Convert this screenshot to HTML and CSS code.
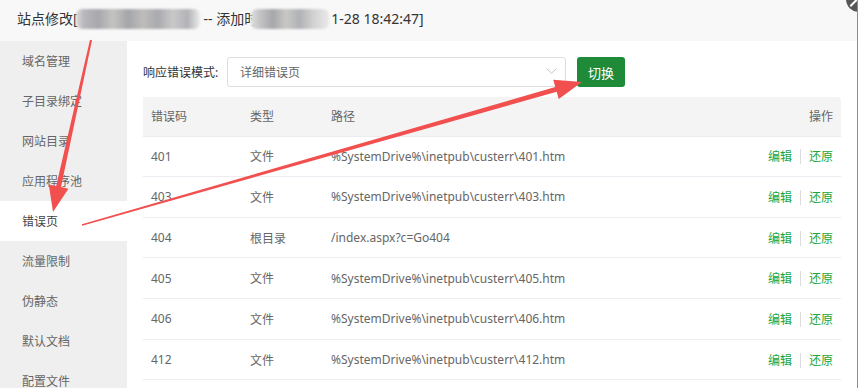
FILE: index.html
```html
<!DOCTYPE html>
<html lang="zh-CN">

<head>
	<meta charset="UTF-8">
	<meta name="viewport" content="width=device-width, initial-scale=1.0">
	<title>站点修改</title>
	<link rel="stylesheet" href="styles.css">
</head>

<body>
	<div class="dialog">
		<div class="dialog-title">站点修改[<span class="mosaic mosaic-name"></span>-- 添加时<span class="mosaic mosaic-date"></span>1-28 18:42:47]</div>

		<div class="dialog-body">
			<ul class="side-menu">
				<li>域名管理</li>
				<li>子目录绑定</li>
				<li>网站目录</li>
				<li>应用程序池</li>
				<li class="active">错误页</li>
				<li>流量限制</li>
				<li>伪静态</li>
				<li>默认文档</li>
				<li>配置文件</li>
			</ul>

			<div class="panel">
				<div class="mode-row">
					<span class="mode-label">响应错误模式:</span>
					<div class="select">
						<span>详细错误页</span>
						<svg class="chevron" width="11" height="6" viewBox="0 0 11 6">
							<path d="M0.5 0.5 L5.5 5.2 L10.5 0.5" fill="none" stroke="#c4c4c4" stroke-width="1" />
						</svg>
					</div>
					<button class="btn-switch">切换</button>
				</div>

				<table class="error-table">
					<thead>
						<tr>
							<th class="col-code">错误码</th>
							<th class="col-type">类型</th>
							<th>路径</th>
							<th class="col-ops">操作</th>
						</tr>
					</thead>
					<tbody>
						<tr>
							<td>401</td>
							<td>文件</td>
							<td>%SystemDrive%\inetpub\custerr\401.htm</td>
							<td class="col-ops"><a>编辑</a><span class="sep"></span><a>还原</a></td>
						</tr>
						<tr>
							<td>403</td>
							<td>文件</td>
							<td>%SystemDrive%\inetpub\custerr\403.htm</td>
							<td class="col-ops"><a>编辑</a><span class="sep"></span><a>还原</a></td>
						</tr>
						<tr>
							<td>404</td>
							<td>根目录</td>
							<td>/index.aspx?c=Go404</td>
							<td class="col-ops"><a>编辑</a><span class="sep"></span><a>还原</a></td>
						</tr>
						<tr>
							<td>405</td>
							<td>文件</td>
							<td>%SystemDrive%\inetpub\custerr\405.htm</td>
							<td class="col-ops"><a>编辑</a><span class="sep"></span><a>还原</a></td>
						</tr>
						<tr>
							<td>406</td>
							<td>文件</td>
							<td>%SystemDrive%\inetpub\custerr\406.htm</td>
							<td class="col-ops"><a>编辑</a><span class="sep"></span><a>还原</a></td>
						</tr>
						<tr>
							<td>412</td>
							<td>文件</td>
							<td>%SystemDrive%\inetpub\custerr\412.htm</td>
							<td class="col-ops"><a>编辑</a><span class="sep"></span><a>还原</a></td>
						</tr>
					</tbody>
				</table>
			</div>
		</div>

		<span class="close-btn"></span>

		<!-- annotation arrows drawn over the screenshot -->
		<svg class="marks" width="858" height="388" viewBox="0 0 858 388">
			<polygon fill="#f24f4f"
				points="90,39.8 92,40.2 61,187.1 68.4,188.8 53,212 48.8,184.4 56.2,186.1" />
			<polygon fill="#f24f4f"
				points="81.8,224.2 82.2,225.8 556.7,91.8 558.75,99 582,82 553.25,79.8 555.3,87" />
		</svg>
	</div>
</body>

</html>
```

FILE: styles.css
```css
* {
	margin: 0;
	padding: 0;
	box-sizing: border-box;
}

html,
body {
	height: 100%;
	font-family: 'Noto Sans', 'Noto Sans CJK SC', sans-serif;
	background: #fff;
	overflow: hidden;
}

.dialog {
	position: relative;
	width: 858px;
	height: 388px;
	border-right: 1px solid #8c8c8c;
	overflow: hidden;
	display: flex;
	flex-direction: column;
}

.dialog-title {
	height: 41px;
	line-height: 38px;
	padding-left: 17px;
	background: #f8f8f8;
	color: #333;
	font-size: 14px;
	white-space: nowrap;
}

.mosaic {
	display: inline-block;
	height: 20px;
	vertical-align: -5px;
	filter: blur(1.2px);
	border-radius: 6px;
}

.mosaic-name {
	width: 124px;
	margin-left: -2px;
	margin-right: 4px;
	background: linear-gradient(90deg, #dcdcdc, #b9b9bc 6%, #a8a8ad 18%, #c5c4c2 30%, #a4a5aa 42%, #bebdbb 54%, #a9aaae 66%, #c9c9c9 78%, #b2b3b7 90%, #ececec);
}

.mosaic-date {
	width: 78px;
	margin-left: -7px;
	margin-right: 2px;
	background: linear-gradient(90deg, #dedede, #c3c3c5 12%, #a6a7ab 28%, #c9c8c6 45%, #b0b1b5 62%, #d2d2d2 80%, #e9e9e9);
}

.dialog-body {
	flex: 1;
	display: flex;
	min-height: 0;
}

.side-menu {
	list-style: none;
	width: 127px;
	flex-shrink: 0;
	background: #efefef;
	overflow: hidden;
}

.side-menu li {
	height: 40px;
	line-height: 41px;
	padding-left: 22px;
	font-size: 12px;
	color: #666;
	white-space: nowrap;
}

.side-menu li.active {
	background: #fff;
	color: #444;
}

.panel {
	flex: 1;
	padding: 16px 16px 0;
}

.mode-row {
	display: flex;
	align-items: center;
	height: 30px;
}

.mode-label {
	width: 84px;
	font-size: 12px;
	color: #333;
	white-space: nowrap;
}

.select {
	width: 339px;
	height: 30px;
	border: 1px solid #ddd;
	border-radius: 3px;
	padding: 0 8px 0 12px;
	display: flex;
	align-items: center;
	justify-content: space-between;
	font-size: 12px;
	color: #666;
}

.chevron {
	margin-top: -2px;
}

.btn-switch {
	margin-left: 11px;
	width: 48px;
	height: 30px;
	border: 0;
	border-radius: 3px;
	background: #1f8a37;
	color: #fff;
	font-family: inherit;
	font-size: 13px;
}

.error-table {
	width: 100%;
	margin-top: 10px;
	border-collapse: collapse;
	font-size: 12px;
	color: #666;
}

.error-table th {
	height: 39px;
	padding: 0 8px;
	background: #f4f4f4;
	font-weight: normal;
	text-align: left;
	border-bottom: 1px solid #ececf0;
}

.error-table thead th:last-child {
	border-top-right-radius: 4px;
}

.error-table td {
	height: 40.67px;
	padding: 0 8px;
	border-bottom: 1px solid #ececf2;
	white-space: nowrap;
}

.error-table .col-code {
	width: 99px;
}

.error-table .col-type {
	width: 81px;
}

.error-table .col-ops {
	text-align: right;
}

.col-ops a {
	color: #20a53a;
}

.col-ops .sep {
	display: inline-block;
	width: 1px;
	height: 15px;
	margin: 0 8px;
	background: #dcdce0;
	vertical-align: -3px;
}

.close-btn {
	position: absolute;
	top: -14px;
	left: 846px;
	width: 26px;
	height: 26px;
	border-radius: 50%;
	background: #575757;
}

.close-btn::after {
	content: '';
	position: absolute;
	left: 3px;
	top: 16px;
	width: 9px;
	height: 2px;
	background: #fff;
	transform: rotate(-45deg);
}

.marks {
	position: absolute;
	top: 0;
	left: 0;
	pointer-events: none;
}
```
